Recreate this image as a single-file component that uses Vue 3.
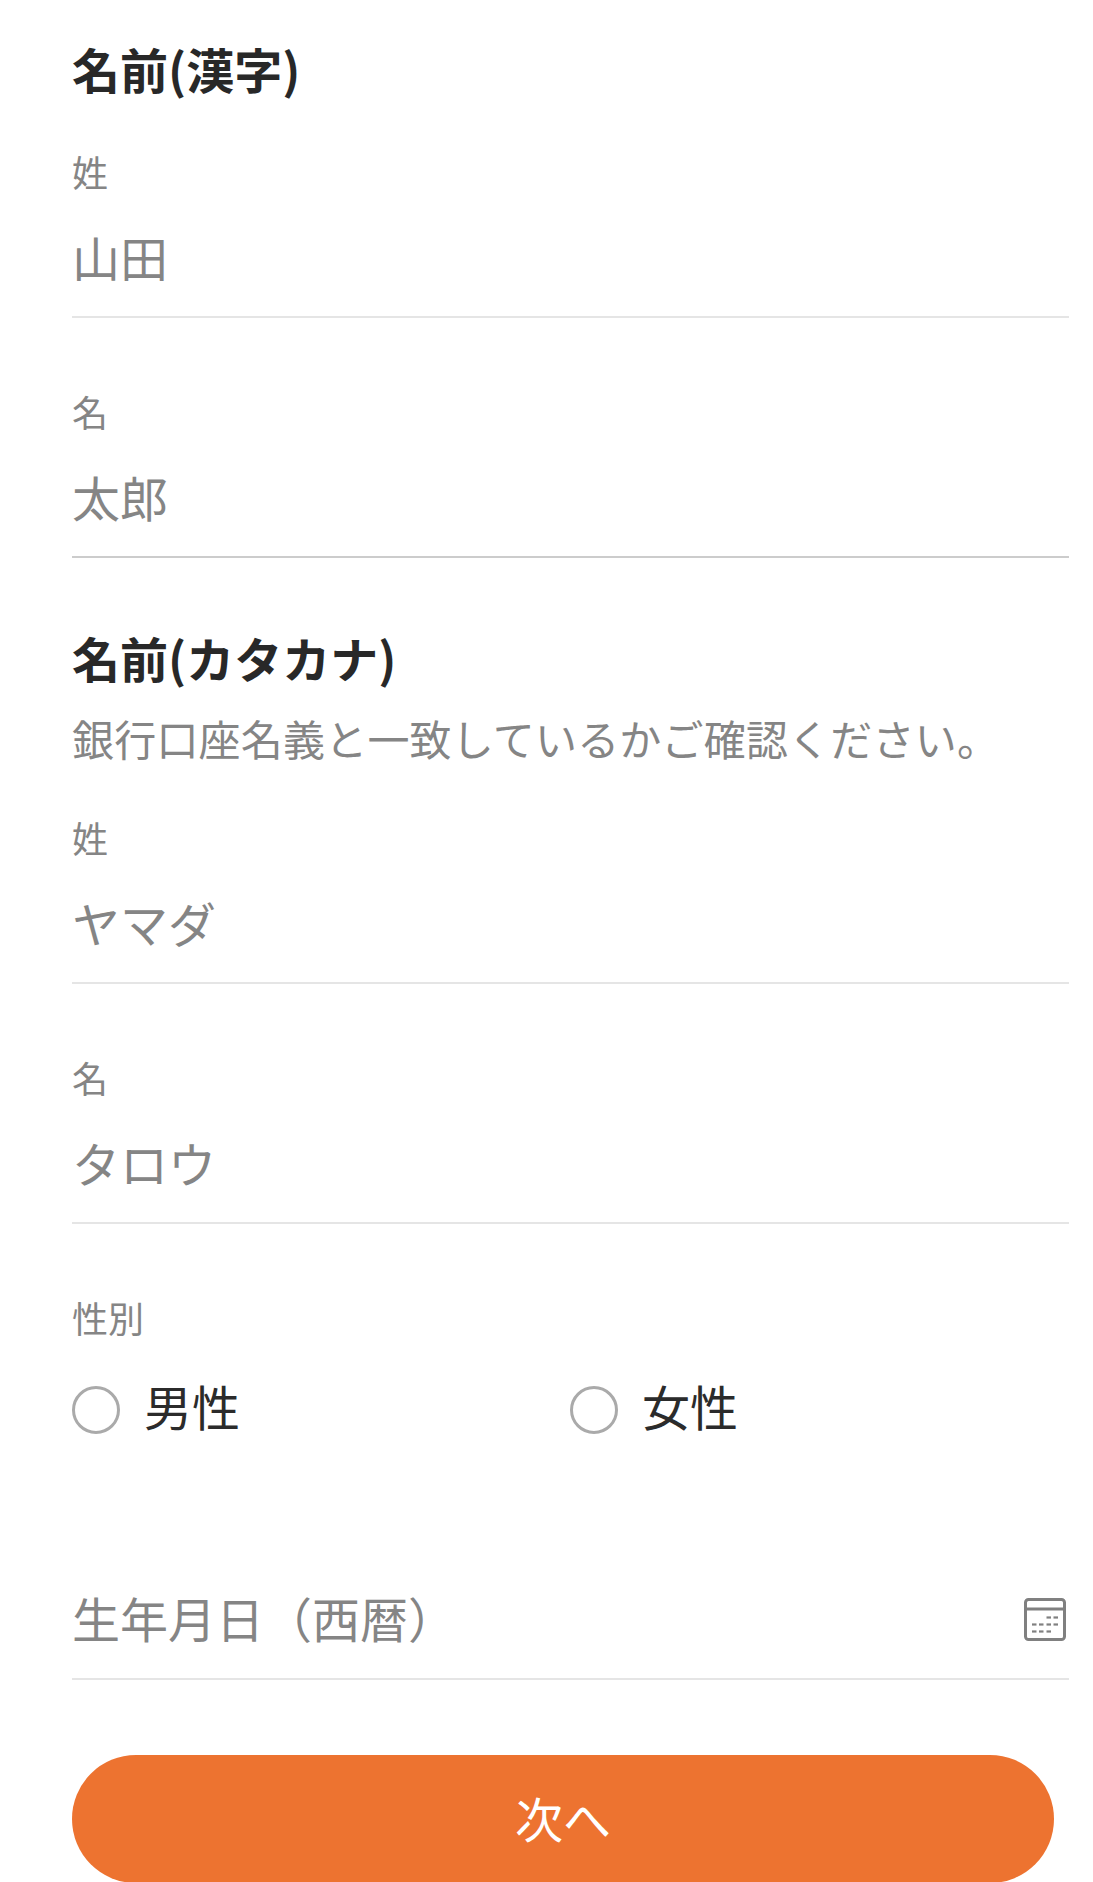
<script setup>
const kanji = [
  { label: '姓', value: '山田', line: 'light' },
  { label: '名', value: '太郎', line: 'dark' },
]
const kana = [
  { label: '姓', value: 'ヤマダ', line: 'light' },
  { label: '名', value: 'タロウ', line: 'light' },
]
const dashes = [
  [1045.5, 1617.5], [1052.5, 1617.5],
  [1031, 1624.5], [1038, 1624.5], [1045.5, 1624.5], [1052.5, 1624.5],
  [1031, 1631.5], [1038, 1631.5], [1045.5, 1631.5],
]
</script>

<template>
  <main class="page">
    <h2 class="heading first">名前(漢字)</h2>
    <div v-for="(f, i) in kanji" :key="f.label" class="field" :class="{ 'field-next': i > 0, 'field-top': i === 0 }">
      <div class="label">{{ f.label }}</div>
      <div class="value" :class="f.line">{{ f.value }}</div>
    </div>

    <h2 class="heading second">名前(カタカナ)</h2>
    <p class="hint">銀行口座名義と一致しているかご確認ください。</p>
    <div v-for="(f, i) in kana" :key="f.label" class="field" :class="{ 'field-next': i > 0, 'field-hint': i === 0 }">
      <div class="label">{{ f.label }}</div>
      <div class="value" :class="f.line">{{ f.value }}</div>
    </div>

    <div class="field field-next">
      <div class="label">性別</div>
      <div class="radios">
        <label class="radio"><span class="circle"></span><span class="radio-text">男性</span></label>
        <label class="radio"><span class="circle"></span><span class="radio-text">女性</span></label>
      </div>
    </div>

    <div class="value light date">
      <span>生年月日（西暦）</span>
      <svg class="cal" viewBox="1018 1591 50 52" width="50" height="52" fill="none" stroke="#808080">
        <rect x="1024.5" y="1599.5" width="39" height="40" rx="3" stroke-width="3" />
        <path d="M1024 1609H1064" stroke-width="3" />
        <path v-for="d in dashes" :key="d.join()" :d="`M${d[0]} ${d[1]}h4.5`" stroke-width="2.2" />
      </svg>
    </div>

    <button class="next" type="button">次へ</button>
  </main>
</template>

<style>
html, body {
  margin: 0;
  background: #fff;
  overflow: hidden;
}
</style>

<style scoped>
.page {
  height: 1882px;
  overflow: hidden;
  box-sizing: border-box;
  padding: 38px 24px 0 72px;
  display: flex;
  flex-direction: column;
  font-family: "Noto Sans CJK JP", "Noto Sans", sans-serif;
  color: #858585;
}
.heading {
  margin: 0;
  font-size: 48px;
  line-height: 60px;
  font-weight: 700;
  color: #282828;
}
.heading.second { margin-top: 69px; }
.hint {
  margin: 21px 0 0;
  font-size: 42px;
  letter-spacing: 0.2px;
  line-height: 60px;
}
.field-top { margin-top: 46px; }
.field-next { margin-top: 66px; }
.field-hint { margin-top: 42px; }
.label {
  font-size: 36px;
  line-height: 54px;
}
.value {
  margin-top: 28px;
  padding-bottom: 30px;
  font-size: 48px;
  line-height: 60px;
  border-bottom: 2px solid #e5e5e5;
}
.value.dark { border-bottom-color: #cccccc; }
.radios {
  margin-top: 36px;
  display: grid;
  grid-template-columns: 498px 1fr;
}
.radio {
  height: 60px;
  display: flex;
  align-items: center;
  gap: 24px;
  font-size: 48px;
  line-height: 60px;
  color: #2b2b2b;
}
.radio-text { padding-bottom: 10px; }
.circle {
  width: 48px;
  height: 48px;
  box-sizing: border-box;
  border: 3px solid #aaaaaa;
  border-radius: 50%;
}
.date {
  margin-top: 147px;
  padding-bottom: 31px;
  display: flex;
  justify-content: space-between;
  align-items: center;
}
.next {
  flex: none;
  margin-top: 75px;
  width: 982px;
  height: 128px;
  padding: 0 0 4px;
  border: 0;
  border-radius: 64px;
  background: #ed7330;
  color: #fff;
  font-family: inherit;
  font-size: 48px;
}
</style>
